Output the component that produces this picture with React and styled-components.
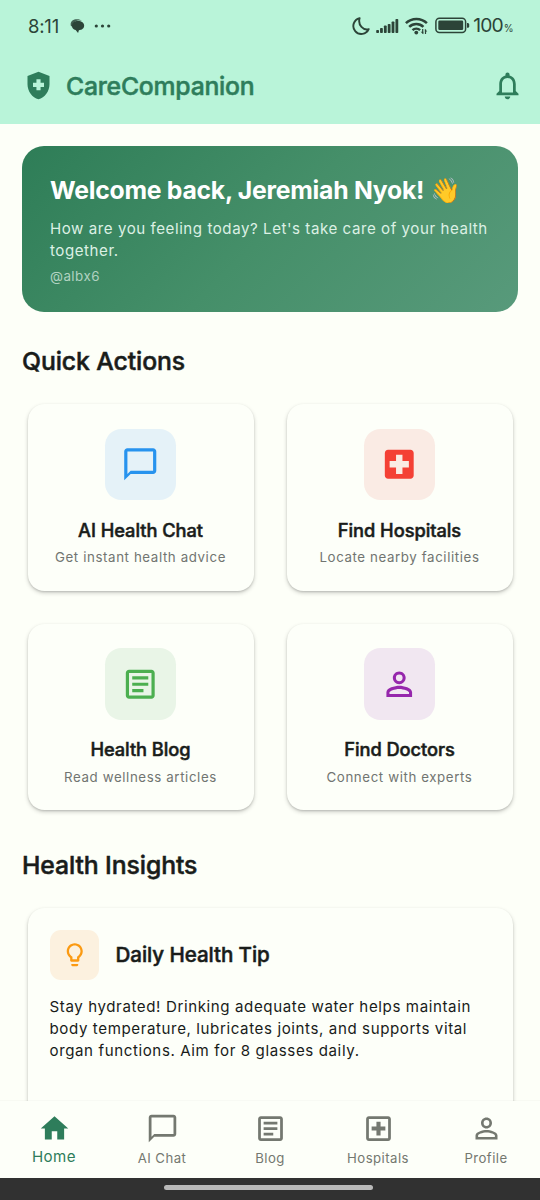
import styled, { createGlobalStyle, css } from 'styled-components'
import {
	MdChatBubbleOutline,
	MdHealthAndSafety,
	MdHome,
	MdLightbulbOutline,
	MdLocalHospital,
	MdOutlineArticle,
	MdOutlineLocalHospital,
	MdOutlineNotifications,
	MdPersonOutline,
} from 'react-icons/md'

const GlobalStyle = createGlobalStyle`
	* {
		box-sizing: border-box;
	}

	body {
		margin: 0;
		background-color: #fdfff8;
		font-family: Inter, 'Liberation Sans', sans-serif;
	}

	h1, h2, h3, p {
		margin: 0;
	}

	svg {
		display: block;
		flex-shrink: 0;
	}
`

// medium weight thickened by a thin outline, narrower than a real semibold
const heavyText = css`
	font-weight: 500;
	-webkit-text-stroke: 0.5px currentColor;
`

const Screen = styled.div`
	display: flex;
	flex-direction: column;
	width: 540px;
	height: 1200px;
	overflow: hidden;
	background-color: #fdfff8;
	color: #191c1a;
`

const Header = styled.header`
	height: 124px;
	flex-shrink: 0;
	background-color: #b9f4d9;
`

const StatusBar = styled.div`
	display: flex;
	align-items: center;
	justify-content: space-between;
	height: 47px;
	padding: 4px 27px 0 28px;
	color: #2c4438;
	font-size: 18.5px;
`

const StatusGroup = styled.div`
	display: flex;
	align-items: center;
`

const StatusIcons = styled(StatusGroup)`
	gap: ${({ $gap }) => $gap}px;
`

const Clock = styled.span`
	width: 42px;
	letter-spacing: -0.2px;
`

const Battery = styled.span`
	margin: 2px 0 0 3px;
	font-size: 19.3px;
	line-height: 22px;
	letter-spacing: -0.9px;

	small {
		margin-left: 1px;
		font-size: 10px;
		letter-spacing: -0.5px;
	}
`

const Toolbar = styled.div`
	display: flex;
	align-items: center;
	height: 77px;
	padding: 0 16.5px 0 22px;
	color: #2e7d5b;
`

const AppName = styled.h1`
	flex: 1;
	margin-left: 11px;
	font-size: 24.75px;
	letter-spacing: -0.23px;
	${heavyText}
`

const Content = styled.main`
	display: flex;
	flex-direction: column;
	flex: 1;
	min-height: 0;
	padding: 22px 22px 0;
	overflow: hidden;
`

const Banner = styled.section`
	height: 166px;
	flex-shrink: 0;
	padding: 28px 28px 0;
	border-radius: 22px;
	background: linear-gradient(135deg, #2e7d57 0%, #458f69 50%, #589a7b 100%);
	color: #fff;
`

const BannerTitle = styled.h2`
	font-size: 24.75px;
	line-height: 32px;
	font-weight: 700;
	white-space: nowrap;
	letter-spacing: -0.25px;
`

const BannerText = styled.p`
	margin-top: 12px;
	font-size: 15.1px;
	line-height: 22px;
	letter-spacing: 0.55px;
	white-space: nowrap;
	color: #dcf0e4;
`

const Username = styled.p`
	margin-top: 4px;
	font-size: 13.4px;
	line-height: 20px;
	letter-spacing: 0.45px;
	color: #b1d3c1;
`

const SectionTitle = styled.h2`
	flex-shrink: 0;
	margin-top: ${({ $top }) => $top}px;
	font-size: 24.75px;
	line-height: 34px;
	letter-spacing: -0.1px;
	${heavyText}
`

const ActionGrid = styled.div`
	display: grid;
	grid-template-columns: 1fr 1fr;
	gap: 33px;
	flex-shrink: 0;
	margin-top: 26px;
	padding: 0 5.5px;
`

const Card = styled.div`
	border-radius: 16.5px;
	background-color: #fdfff9;
	box-shadow: 0 1px 2px rgba(0, 0, 0, 0.13), 0 2px 4px rgba(0, 0, 0, 0.19);
`

const ActionCard = styled(Card)`
	display: flex;
	flex-direction: column;
	align-items: center;
	height: 186.5px;
	padding-top: 24.5px;
`

const IconTile = styled.div`
	display: flex;
	align-items: center;
	justify-content: center;
	flex-shrink: 0;
	width: ${({ $size }) => $size}px;
	height: ${({ $size }) => $size}px;
	border-radius: ${({ $radius }) => $radius}px;
	background-color: ${({ $bg }) => $bg};
	color: ${({ $color }) => $color};
`

const ActionTitle = styled.h3`
	margin-top: 17.5px;
	font-size: 18.3px;
	line-height: 24px;
	letter-spacing: -0.06px;
	${heavyText}
`

const ActionText = styled.p`
	margin-top: 6.5px;
	font-size: 13.3px;
	line-height: 19px;
	letter-spacing: 0.6px;
	color: #717571;
`

const TipCard = styled(Card)`
	flex-shrink: 0;
	height: 240px;
	margin: 26px 5.5px 0;
	padding: 22px 22px 0;
`

const TipHeader = styled.div`
	display: flex;
	align-items: center;
	gap: 16.5px;
`

const TipTitle = styled.h3`
	font-size: 20.6px;
	letter-spacing: -0.08px;
	${heavyText}
`

const TipText = styled.p`
	margin-top: 16.5px;
	font-size: 15.1px;
	line-height: 22px;
	letter-spacing: 0.6px;
	white-space: nowrap;
`

const BottomNav = styled.nav`
	display: grid;
	grid-template-columns: repeat(5, 1fr);
	flex-shrink: 0;
	height: 77px;
	background-color: #fdfff9;
	box-shadow: 0 -1px 1px rgba(0, 0, 0, 0.02);
	z-index: 1;
`

const NavItem = styled.div`
	display: flex;
	flex-direction: column;
	align-items: center;
	padding-top: 11px;
	color: ${({ $active }) => ($active ? '#2e7d5b' : '#747870')};
	font-size: ${({ $active }) => ($active ? 15.1 : 13.2)}px;
	line-height: 20px;
	letter-spacing: 0.45px;

	span {
		margin-top: ${({ $active }) => ($active ? 1.5 : 2.5)}px;
	}
`

const GestureBar = styled.div`
	display: flex;
	justify-content: center;
	flex-shrink: 0;
	height: 22px;
	padding: 6.5px 4px 0 0;
	background-color: #313131;

	&::after {
		content: '';
		width: 209px;
		height: 5.5px;
		border-radius: 3px;
		background-color: #b9b9b9;
	}
`

const MessageIcon = () => (
	<svg width='15' height='16' viewBox='0 0 16 16' fill='currentColor'>
		<path d='M1 8C-.4 3.6 3 .7 7.4.7c2.400 0 4.200.7 5.300 1.800C8 1.400 3.200 3.200 2.200 8.600z' opacity='.85' />
		<path d='M8.500 2.600c4 0 6.600 1.900 6.600 4.900 0 3-2.300 4.900-5.600 5L8.600 15.400 6 12.300C3.600 11.700 2 10 2 7.600c0-3 2.600-5 6.500-5z' />
	</svg>
)

const DotsIcon = () => (
	<svg width='17' height='4' viewBox='0 0 17 4' fill='currentColor'>
		<circle cx='2.300' cy='2' r='1.600' />
		<circle cx='8.500' cy='2' r='1.600' />
		<circle cx='14.700' cy='2' r='1.600' />
	</svg>
)

const MoonIcon = () => (
	<svg width='18' height='18' viewBox='0 0 18 18' fill='none' stroke='currentColor' strokeWidth='1.900' strokeLinejoin='round'>
		<path d='M7.600 1.200a8 8 0 1 0 9.100 11C11.500 13.600 5.600 8.200 7.600 1.200z' />
	</svg>
)

const signalBars = [3, 5, 7.5, 9, 11.5, 14]

const SignalIcon = () => (
	<svg width='23' height='14' viewBox='0 0 23 14' fill='currentColor'>
		{signalBars.map((h, i) => (
			<rect key={h} x={0.2 + i * 3.85} y={14 - h} width='2.800' height={h} rx='.8' />
		))}
	</svg>
)

const WifiIcon = () => (
	<svg width='23' height='18' viewBox='0 0 23 18' fill='none' stroke='currentColor' strokeWidth='2.500'>
		<path d='M.9 6.200a15 15 0 0 1 21 0M4.200 9.900a10 10 0 0 1 14.200 0M7.500 13.200a5.500 5.500 0 0 1 7.600 0' />
		<circle cx='11.300' cy='15.600' r='1.900' fill='currentColor' stroke='none' />
		<path d='M17.700 16.500v-4.500M20.500 12.500V17' strokeWidth='1.200' />
		<path d='M15.700 14.800h2.600v2.500zM19.900 12v2.500h2.400z' fill='currentColor' stroke='none' />
	</svg>
)

const BatteryIcon = () => (
	<svg width='36' height='17' viewBox='-1 0 36 17' fill='currentColor'>
		<rect x='.9' y='1.200' width='29.700' height='14.200' rx='3.500' fill='none' stroke='currentColor' strokeWidth='1.500' />
		<rect x='3.300' y='3.500' width='24.900' height='9.600' rx='1.300' />
		<path d='M32 6h.8q1.400 0 1.400 1.500v1.800q0 1.500-1.400 1.500H32z' />
	</svg>
)

const actions = [
	{
		title: 'AI Health Chat',
		text: 'Get instant health advice',
		Icon: MdChatBubbleOutline,
		color: '#2793ee',
		bg: '#e5f2f8',
	},
	{
		title: 'Find Hospitals',
		text: 'Locate nearby facilities',
		Icon: MdLocalHospital,
		color: '#f44035',
		bg: '#faebe4',
	},
	{
		title: 'Health Blog',
		text: 'Read wellness articles',
		Icon: MdOutlineArticle,
		color: '#4caf50',
		bg: '#e9f5e7',
	},
	{
		title: 'Find Doctors',
		text: 'Connect with experts',
		Icon: MdPersonOutline,
		color: '#9627ac',
		bg: '#f1e7f1',
	},
]

const navItems = [
	{ label: 'Home', Icon: MdHome, active: true },
	{ label: 'AI Chat', Icon: MdChatBubbleOutline },
	{ label: 'Blog', Icon: MdOutlineArticle },
	{ label: 'Hospitals', Icon: MdOutlineLocalHospital },
	{ label: 'Profile', Icon: MdPersonOutline },
]

const AppHeader = () => (
	<Header>
		<StatusBar>
			<StatusGroup>
				<Clock>8:11</Clock>
				<StatusIcons $gap={9}>
					<MessageIcon />
					<DotsIcon />
				</StatusIcons>
			</StatusGroup>
			<StatusGroup>
				<StatusIcons $gap={6}>
					<MoonIcon />
					<SignalIcon />
					<WifiIcon />
					<BatteryIcon />
				</StatusIcons>
				<Battery>
					100<small>%</small>
				</Battery>
			</StatusGroup>
		</StatusBar>
		<Toolbar>
			<MdHealthAndSafety size={33} />
			<AppName>CareCompanion</AppName>
			<MdOutlineNotifications size={33} />
		</Toolbar>
	</Header>
)

const App = () => (
	<>
		<GlobalStyle />
		<Screen>
			<AppHeader />
			<Content>
				<Banner>
					<BannerTitle>Welcome back, Jeremiah Nyok! 👋</BannerTitle>
					<BannerText>
						How are you feeling today? Let's take care of your health
						<br />
						together.
					</BannerText>
					<Username>@albx6</Username>
				</Banner>
				<SectionTitle $top={32}>Quick Actions</SectionTitle>
				<ActionGrid>
					{actions.map(({ title, text, Icon, color, bg }) => (
						<ActionCard key={title}>
							<IconTile $size={71.5} $radius={16.5} $bg={bg} $color={color}>
								<Icon size={38.5} />
							</IconTile>
							<ActionTitle>{title}</ActionTitle>
							<ActionText>{text}</ActionText>
						</ActionCard>
					))}
				</ActionGrid>
				<SectionTitle $top={38}>Health Insights</SectionTitle>
				<TipCard>
					<TipHeader>
						<IconTile $size={49.5} $radius={11} $bg='#fcf1df' $color='#fb9a12'>
							<MdLightbulbOutline size={27.5} />
						</IconTile>
						<TipTitle>Daily Health Tip</TipTitle>
					</TipHeader>
					<TipText>
						Stay hydrated! Drinking adequate water helps maintain
						<br />
						body temperature, lubricates joints, and supports vital
						<br />
						organ functions. Aim for 8 glasses daily.
					</TipText>
				</TipCard>
			</Content>
			<BottomNav>
				{navItems.map(({ label, Icon, active }) => (
					<NavItem key={label} $active={active}>
						<Icon size={33} />
						<span>{label}</span>
					</NavItem>
				))}
			</BottomNav>
			<GestureBar />
		</Screen>
	</>
)

export default App
